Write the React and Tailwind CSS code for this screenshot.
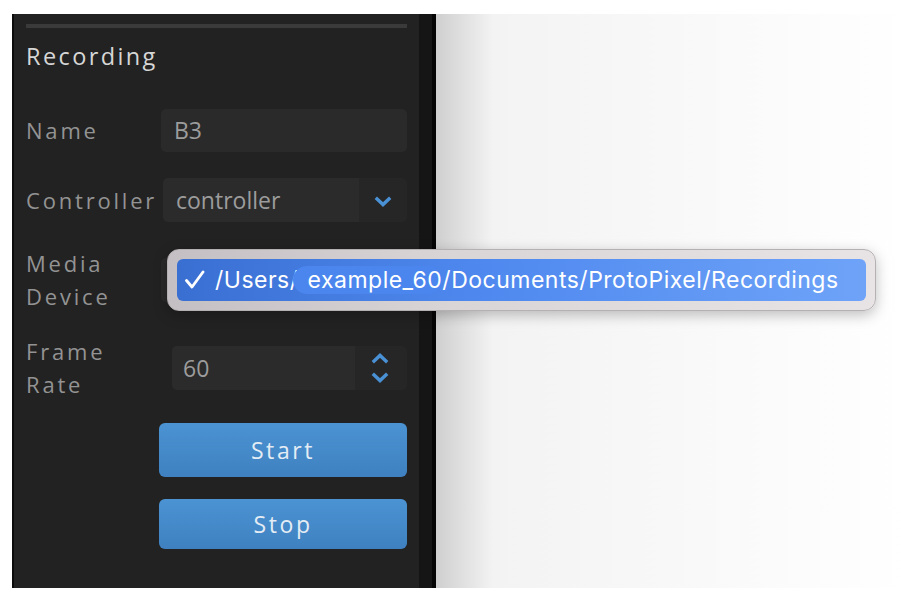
import React from "react";

const panelFont = { fontFamily: '"Open Sans", "Noto Sans", sans-serif' };

function ChevronDown({ className }) {
  return (
    <svg className={className} width="18" height="11" viewBox="0 0 18 11" fill="none">
      <path d="M1.8 1.8 L9 8.6 L16.2 1.8" stroke="#4a90d4" strokeWidth="3.4" strokeLinecap="butt" strokeLinejoin="miter" />
    </svg>
  );
}
function ChevronUp({ className }) {
  return (
    <svg className={className} width="18" height="11" viewBox="0 0 18 11" fill="none">
      <path d="M1.8 9.2 L9 2.4 L16.2 9.2" stroke="#4a90d4" strokeWidth="3.4" strokeLinecap="butt" strokeLinejoin="miter" />
    </svg>
  );
}

export default function App() {
  return (
    <div className="relative w-[910px] h-[604px] bg-white overflow-hidden" style={panelFont}>
      <div className="flex mt-[14px] ml-[12px] h-[574px]">
        {/* panel */}
        <div className="w-[407px] h-full bg-[#222222] border-l-2 border-[#0c0c0c] pl-[12px] pr-[12px] pt-[10px] flex flex-col">
          <div className="h-[4px] bg-[#3a3a3a] w-[381px]" />
          <div className="mt-[13px] text-[23.5px] leading-[30px] tracking-[2.4px] text-[#d6d6d6]">Recording</div>

          {/* Name */}
          <div className="mt-[38px] flex items-center h-[43px]">
            <div className="w-[135px] text-[22px] tracking-[2.8px] text-[#939393]">Name</div>
            <div className="flex-1 h-full bg-[#2a2a2a] rounded-[5px] flex items-center pl-[13px] text-[23px] text-[#9c9c9c]">B3</div>
          </div>

          {/* Controller */}
          <div className="mt-[26px] flex items-center h-[44px]">
            <div className="w-[137px] text-[22px] tracking-[2.8px] text-[#939393] whitespace-nowrap">Controller</div>
            <div className="flex-1 h-full rounded-[5px] flex overflow-hidden">
              <div className="flex-1 bg-[#2b2b2b] flex items-center pl-[13px] text-[23px] text-[#9c9c9c]">controller</div>
              <div className="w-[48px] bg-[#262626] flex items-center justify-center">
                <ChevronDown className="mt-[2px]" />
              </div>
            </div>
          </div>

          {/* Media Device */}
          <div className="mt-[25px] flex items-center h-[66px]">
            <div className="w-[135px] text-[22px] leading-[33px] tracking-[2.8px] text-[#939393]">
              Media<br />Device
            </div>
            <div className="flex-1 h-[44px] bg-[#2a2a2a] rounded-[5px]" />
          </div>

          {/* Frame Rate */}
          <div className="mt-[22px] flex items-center h-[66px]">
            <div className="w-[146px] text-[22px] leading-[33px] tracking-[2.8px] text-[#939393]">
              Frame<br />Rate
            </div>
            <div className="flex-1 h-[44px] rounded-[5px] flex overflow-hidden">
              <div className="flex-1 bg-[#2b2b2b] flex items-center pl-[11px] text-[23px] text-[#9c9c9c]">60</div>
              <div className="w-[52px] bg-[#262626] flex flex-col items-center justify-center gap-[8px]">
                <ChevronUp className="mr-[2px]" />
                <ChevronDown className="mr-[2px]" />
              </div>
            </div>
          </div>

          {/* Buttons */}
          <div className="mt-[22px] ml-[133px] h-[54px] rounded-[6px] bg-gradient-to-b from-[#4b93d3] to-[#3f81c0] flex items-center justify-center text-[23px] tracking-[2.6px] text-[#e3ecf4]">
            Start
          </div>
          <div className="mt-[22px] ml-[133px] h-[50px] rounded-[6px] bg-gradient-to-b from-[#4b93d3] to-[#3f81c0] flex items-center justify-center text-[23px] tracking-[2.6px] text-[#e3ecf4]">
            Stop
          </div>
        </div>
        {/* dark strip */}
        <div className="w-[13px] h-full bg-[#151515]" />
        <div className="w-[4px] h-full bg-[#050505]" />
        {/* right light area */}
        <div className="flex-1 h-full bg-gradient-to-r from-[#cfcfcf] via-[#f3f3f3] via-[12%] to-white" />
      </div>

      {/* popup menu */}
      <div
        className="absolute left-[167px] top-[249px] w-[709px] h-[62px] rounded-[12px] border border-[#b5b1b3] bg-gradient-to-r from-[#c4bfc2] via-[#d9d5d7] via-[40%] to-[#e8e4e6] shadow-[0_4px_14px_rgba(0,0,0,0.25)] p-[9px]"
        style={{ fontFamily: 'Inter, "Liberation Sans", sans-serif' }}
      >
        <div className="h-[42px] rounded-[6px] bg-gradient-to-r from-[#3a6fd2] via-[#4f89ef] via-[45%] to-[#6ea3f8] flex items-center pl-[8px] text-[23px] text-white whitespace-nowrap tracking-[0.5px]">
          <svg width="30" height="20" viewBox="0 0 30 20" fill="none" className="shrink-0">
            <path d="M1.5 10.5 L7 17 L18 2" stroke="white" strokeWidth="2.8" strokeLinecap="round" strokeLinejoin="round" />
          </svg>
          <span>/Users/</span>
          <span className="ml-[-6px] pl-[15px] h-[28px] rounded-full bg-[#4a86ee] flex items-center">example_60</span>
          <span>/Documents/ProtoPixel/Recordings</span>
        </div>
      </div>
    </div>
  );
}
